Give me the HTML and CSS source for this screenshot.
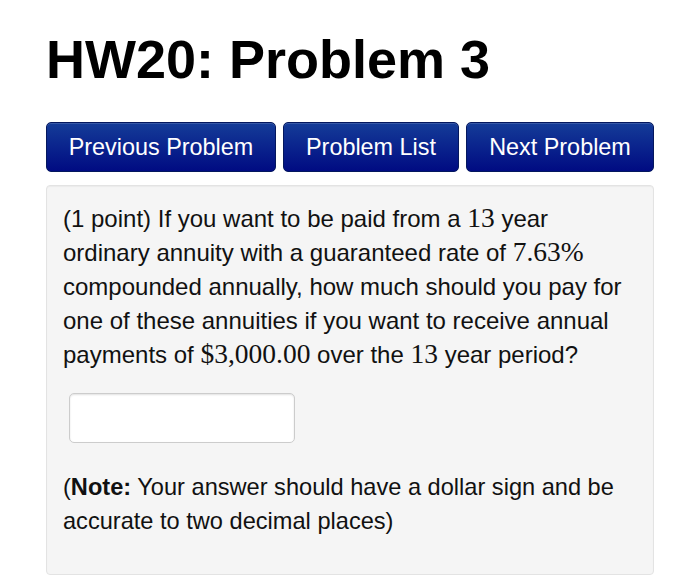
FILE: index.html
```html
<!DOCTYPE html>
<html>
<head>
<meta charset="utf-8">
<link rel="stylesheet" href="styles.css">
</head>
<body>
<div class="page">
  <h1 class="title">HW20: Problem 3</h1>
  <div class="nav">
    <a class="btn btn-prev">Previous Problem</a>
    <a class="btn btn-list">Problem List</a>
    <a class="btn btn-next">Next Problem</a>
  </div>
  <div class="panel">
    <p class="question">(1 point) If you want to be paid from a <span class="math">13</span> year ordinary annuity with a guaranteed rate of <span class="math">7.63%</span> compounded annually, how much should you pay for one of these annuities if you want to receive annual payments of <span class="math">$3,000.00</span> over the <span class="math">13</span> year period?</p>
    <input class="answer" type="text">
    <p class="note">(<b>Note:</b> Your answer should have a dollar sign and be accurate to two decimal places)</p>
  </div>
</div>
</body>
</html>
```
FILE: styles.css
```css
html, body {
  margin: 0;
  padding: 0;
  background: #ffffff;
}
body {
  font-family: "Liberation Sans", Arial, Helvetica, sans-serif;
  color: #111;
}
.page {
  width: 608px;
  margin-left: 46px;
}
.title {
  font-size: 54px;
  line-height: 54px;
  font-weight: bold;
  margin: 32px 0 36px 0;
  color: #000;
}
.nav {
  display: flex;
  gap: 7px;
  margin-bottom: 13px;
}
.btn {
  box-sizing: border-box;
  height: 50px;
  display: flex;
  align-items: center;
  justify-content: center;
  font-size: 23.4px;
  color: #fff;
  background: linear-gradient(#143c98, #000b82);
  border: 1px solid #04175e;
  border-radius: 5px;
  box-shadow: inset 0 1px 0 rgba(255,255,255,0.15);
}
.btn-prev { width: 230px; }
.btn-list { width: 176px; }
.btn-next { width: 188px; }
.panel {
  box-sizing: border-box;
  width: 608px;
  background: #f5f5f5;
  border: 1px solid #e3e3e3;
  border-radius: 4px;
  box-shadow: inset 0 1px 1px rgba(0,0,0,0.04);
  padding: 16px 21px 36px 16px;
  font-size: 24px;
  line-height: 34px;
}
.question, .note {
  margin: 0;
}
.note {
  font-size: 23.6px;
}
.math {
  font-family: "Liberation Serif", "Times New Roman", serif;
  font-size: 27.5px;
  line-height: 0;
}
.answer {
  display: block;
  box-sizing: border-box;
  width: 226px;
  height: 50px;
  margin: 21px 0 27px 6px;
  border: 1px solid #cccccc;
  border-radius: 5px;
  background: #fff;
  box-shadow: inset 0 1px 2px rgba(0,0,0,0.12);
  padding: 0;
}
```
